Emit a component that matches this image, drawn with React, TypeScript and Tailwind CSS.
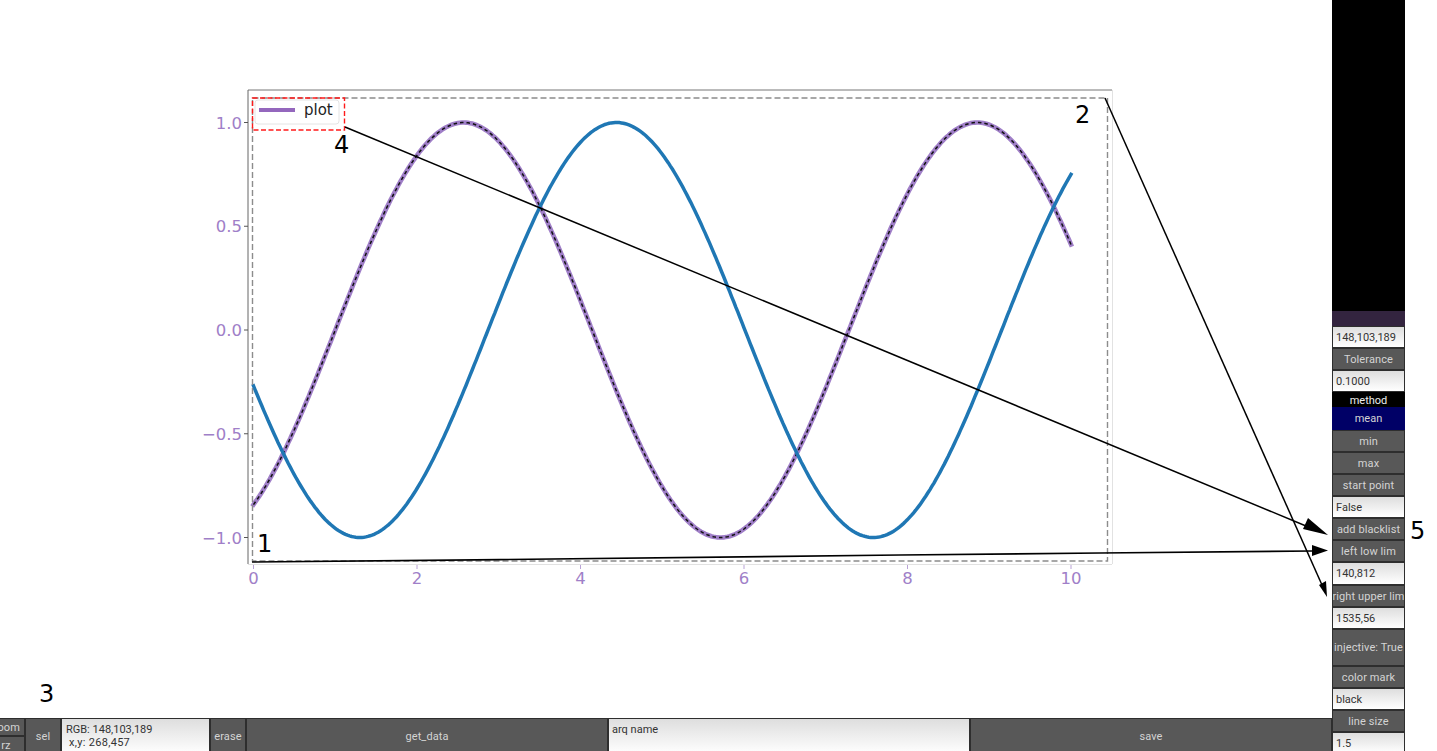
import React from 'react';

const BTN = 'flex items-center justify-center bg-[#585858] border border-[#2e2e2e] text-[#d4d4d4] text-[11px] leading-none tracking-[0.1px] whitespace-nowrap overflow-hidden';
const INPUT = 'flex items-start bg-gradient-to-b from-[#dedede] to-white border border-[#2e2e2e] text-[#333333] text-[11px] leading-[14px] px-[3px] pt-[4px] whitespace-nowrap overflow-hidden';

const X0 = 253.5;
const Y0 = 330;
const SX = 81.75;
const SY = 207.5;

const curve = (fn: (x: number) => number) => {
  const pts: string[] = [];
  for (let i = 0; i <= 400; i++) {
    const x = i / 40;
    pts.push(`${(X0 + x * SX).toFixed(1)},${(Y0 - fn(x) * SY).toFixed(1)}`);
  }
  return pts.join(' ');
};

const purple = curve((x) => Math.sin(x - 1));
const blue = curve((x) => Math.cos(x - 4.44));

const Btn: React.FC<{ label: string; h: string }> = ({ label, h }) => (
  <div className={`${BTN} ${h} shrink-0`}>{label}</div>
);

const Inp: React.FC<{ label: string; h: string }> = ({ label, h }) => (
  <div className={`${INPUT} ${h} shrink-0`}>{label}</div>
);

const Overlay = () => (
  <svg width="1437" height="751" className="absolute left-0 top-0 pointer-events-none">
    {/* axes */}
    <line x1="248" y1="90" x2="1112" y2="90" stroke="#777777" strokeWidth="1" />
    <line x1="248" y1="90" x2="248" y2="564" stroke="#666666" strokeWidth="1" />
    <line x1="248" y1="564.5" x2="1112" y2="564.5" stroke="#e2e2e2" strokeWidth="1" />
    <line x1="1112.5" y1="90" x2="1112.5" y2="564" stroke="#e2e2e2" strokeWidth="1" />
    {[1, 0.5, 0, -0.5, -1].map((v) => (
      <g key={v}>
        <line x1="244" x2="248" y1={Y0 - v * SY} y2={Y0 - v * SY} stroke="#555555" strokeWidth="1" />
        <text x="242" y={Y0 - v * SY + 6} textAnchor="end" fontFamily="DejaVu Sans" fontSize="16.5" fill="#a07fc8">
          {v < 0 ? `\u2212${Math.abs(v).toFixed(1)}` : v.toFixed(1)}
        </text>
      </g>
    ))}
    {[0, 2, 4, 6, 8, 10].map((v) => (
      <g key={v}>
        <line y1="565" y2="569" x1={X0 + v * SX} x2={X0 + v * SX} stroke="#b9a3d6" strokeWidth="1" />
        <text x={X0 + v * SX} y="584" textAnchor="middle" fontFamily="DejaVu Sans" fontSize="16.5" fill="#a07fc8">
          {v}
        </text>
      </g>
    ))}

    {/* curves */}
    <polyline points={purple} fill="none" stroke="#a07fc8" strokeWidth="4.6" strokeLinecap="square" />
    <polyline points={purple} fill="none" stroke="#111111" strokeWidth="1.5" strokeDasharray="3.5 3" />
    <polyline points={blue} fill="none" stroke="#1f77b4" strokeWidth="3.5" strokeLinecap="square" />

    {/* selection boxes */}
    <rect x="252.5" y="98" width="855" height="463" fill="none" stroke="#8c8c8c" strokeWidth="1.4" strokeDasharray="6 3" />
    <rect x="255" y="100" width="84" height="24" rx="3" fill="#ffffff" fillOpacity="0.8" stroke="#e4e4e4" strokeWidth="1" />
    <line x1="259" y1="110" x2="295" y2="110" stroke="#9467bd" strokeWidth="4" />
    <text x="304" y="115" fontFamily="DejaVu Sans" fontSize="15" fill="#222222">plot</text>
    <rect x="252.5" y="98" width="92" height="32" fill="none" stroke="#ff1a1a" strokeWidth="1.4" strokeDasharray="5 2.5" />

    {/* annotations */}
    <polyline points="252,562 500,559.6 900,555 1100,553 1312,551" fill="none" stroke="#000000" strokeWidth="1.7" />
    <polygon points="1328,550.5 1312,545 1312,556" fill="#000000" />
    <line x1="1105" y1="98" x2="1322" y2="585" stroke="#000000" strokeWidth="1.5" />
    <polygon points="1327,597 1319,585 1326,581" fill="#000000" />
    <line x1="345" y1="127" x2="1306" y2="526" stroke="#000000" strokeWidth="1.5" />
    <polygon points="1328,535 1308,518 1303,529" fill="#000000" />

    <g fontFamily="DejaVu Sans" fontSize="24" fill="#000000">
      <text x="257" y="552">1</text>
      <text x="1075" y="123">2</text>
      <text x="39" y="702">3</text>
      <text x="334" y="153">4</text>
      <text x="1410" y="539">5</text>
    </g>
  </svg>
);

export default function App() {
  return (
    <div className="relative flex w-[1437px] h-[751px] overflow-hidden bg-white font-['Roboto',sans-serif]">
      <div className="flex flex-col w-[1332px] shrink-0">
        <div className="h-[718px] shrink-0" />
        <div className="flex h-[37px] shrink-0">
          <div className="flex flex-col w-[25px] overflow-hidden shrink-0">
            <div className={`${BTN} h-[18px] w-[38px] -ml-[13px] shrink-0`}>zoom</div>
            <div className={`${BTN} h-[19px] w-[38px] -ml-[13px] shrink-0`}>rz</div>
          </div>
          <Btn label="sel" h="w-[36px]" />
          <div className={`${INPUT} w-[149px] shrink-0 !block !pl-[4px] !leading-[13px]`}>
            RGB: 148,103,189
            <br />
            <span className="tracking-[0.3px]">&nbsp;x,y: 268,457</span>
          </div>
          <Btn label="erase" h="w-[36px]" />
          <Btn label="get_data" h="w-[362px]" />
          <Inp label="arq name" h="w-[362px]" />
          <Btn label="save" h="w-[362px]" />
        </div>
      </div>
      <div className="flex flex-col w-[73px] shrink-0">
        <div className="h-[311px] bg-black shrink-0" />
        <div className="h-[15px] bg-[#33243f] shrink-0" />
        <Inp label="148,103,189" h="h-[22px]" />
        <Btn label="Tolerance" h="h-[22px]" />
        <Inp label="0.1000" h="h-[22px]" />
        <div className="flex items-center justify-center h-[15px] pt-px bg-black text-[#eeeeee] text-[11px] leading-none shrink-0">method</div>
        <div className="flex items-center justify-center h-[23px] bg-[#000066] text-[#d4d4d4] text-[11px] leading-none shrink-0">mean</div>
        <Btn label="min" h="h-[22px]" />
        <Btn label="max" h="h-[22px]" />
        <Btn label="start point" h="h-[22px]" />
        <Inp label="False" h="h-[22px]" />
        <Btn label="add blacklist" h="h-[22px]" />
        <Btn label="left low lim" h="h-[22px]" />
        <Inp label="140,812" h="h-[23px]" />
        <Btn label="right upper lim" h="h-[22px]" />
        <Inp label="1535,56" h="h-[22px]" />
        <Btn label="injective: True" h="h-[37px]" />
        <Btn label="color mark" h="h-[22px]" />
        <Inp label="black" h="h-[22px]" />
        <Btn label="line size" h="h-[22px]" />
        <Inp label="1.5" h="h-[22px]" />
      </div>
      <Overlay />
    </div>
  );
}
